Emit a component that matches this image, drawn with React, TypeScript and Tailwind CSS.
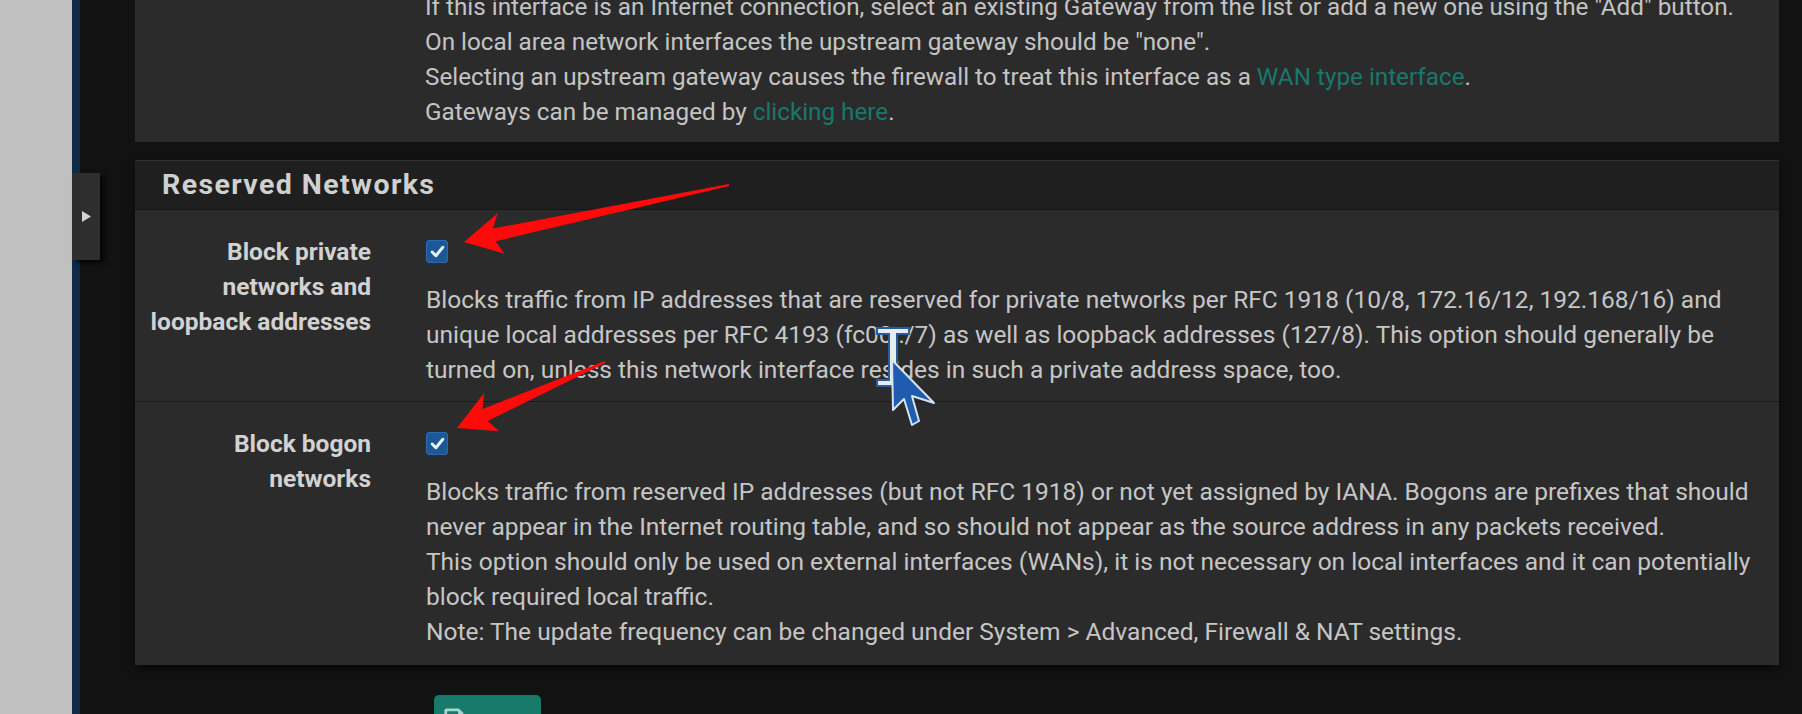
import { FaSave } from 'react-icons/fa'

type Pt = [number, number]

// red "swoosh" arrow, built along the line tip -> tail
const arrowPoints = (tip: Pt, tail: Pt) => {
  const dx = tail[0] - tip[0]
  const dy = tail[1] - tip[1]
  const len = Math.hypot(dx, dy)
  const u: Pt = [dx / len, dy / len]
  const p: Pt = [-u[1], u[0]]
  const at = (a: number, b: number) =>
    `${(tip[0] + u[0] * a + p[0] * b).toFixed(1)},${(tip[1] + u[1] * a + p[1] * b).toFixed(1)}`
  return [
    at(0, 0),
    at(39, -21),
    at(31, -7),
    at(len, -1),
    at(len, 1),
    at(31, 6),
    at(37, 20),
  ].join(' ')
}

const Checkbox = () => (
  <div className="flex h-[23px] w-[22px] items-center justify-center rounded-[3px] border border-[#2c6cae] bg-[#1b5896]">
    <svg viewBox="0 0 16 16" className="h-[17px] w-[17px]">
      <path
        d="M3 8.5 L6.5 12 L13 4"
        fill="none"
        stroke="#e8f0f8"
        strokeWidth="2.8"
        strokeLinecap="round"
        strokeLinejoin="round"
      />
    </svg>
  </div>
)

const Row = ({
  label,
  lines,
  pb,
}: {
  label: string[]
  lines: string[]
  pb: string
}) => (
  <div className={'grid grid-cols-[236px_1fr] gap-x-[55px] pt-[24px] ' + pb}>
    <div className="text-right text-[24.5px] font-bold leading-[35px] text-[#d2d2d2]">
      {label.map((l) => (
        <div key={l} className="whitespace-nowrap">
          {l}
        </div>
      ))}
    </div>
    <div>
      <div className="flex h-[35px] items-center">
        <Checkbox />
      </div>
      <div className="mt-[13px] text-[24.5px] leading-[35px] text-[#c6c6c6]">
        {lines.map((l) => (
          <div key={l} className="whitespace-nowrap">
            {l}
          </div>
        ))}
      </div>
    </div>
  </div>
)

export default function App() {
  return (
    <div className="relative flex h-[714px] w-[1802px] overflow-hidden bg-[#121212] font-[family-name:Roboto,sans-serif]">
      <div className="w-[72px] shrink-0 bg-[#c0c0c0]" />
      <div className="w-[8px] shrink-0 bg-[#0f2b47]" />

      <main className="flex-1 pl-[55px] pr-[23px]">
        {/* gateway help text, scrolled partly off the top */}
        <section className="h-[142px] overflow-hidden bg-[#2b2b2b] pl-[290px]">
          <div className="-mt-[10px] text-[24.25px] leading-[35px] text-[#c4c4c4]">
            <div className="whitespace-nowrap">
              If this interface is an Internet connection, select an existing Gateway from the list or add a new one using the "Add" button.
            </div>
            <div className="whitespace-nowrap">
              On local area network interfaces the upstream gateway should be "none".
            </div>
            <div className="whitespace-nowrap">
              Selecting an upstream gateway causes the firewall to treat this interface as a{' '}
              <span className="text-[#19786b]">WAN type interface</span>.
            </div>
            <div className="whitespace-nowrap">
              Gateways can be managed by <span className="text-[#19786b]">clicking here</span>.
            </div>
          </div>
        </section>

        <div className="h-[18px]" />

        <section className="bg-[#2b2b2b] shadow-[0_4px_8px_rgba(0,0,0,0.5)]">
          <div className="flex h-[50px] items-center border-t border-b border-t-[#303030] border-b-[#161616] bg-[#1f1f1f] px-[27px]">
            <h2 className="text-[28.5px] font-bold tracking-[1.4px] text-[#d0d0d0]">Reserved Networks</h2>
          </div>

          <Row
            label={['Block private', 'networks and', 'loopback addresses']}
            lines={[
              'Blocks traffic from IP addresses that are reserved for private networks per RFC 1918 (10/8, 172.16/12, 192.168/16) and',
              'unique local addresses per RFC 4193 (fc00::/7) as well as loopback addresses (127/8). This option should generally be',
              'turned on, unless this network interface resides in such a private address space, too.',
            ]}
            pb="pb-[14px]"
          />
          <div className="h-px bg-[#1a1a1a]" />
          <Row
            label={['Block bogon', 'networks']}
            lines={[
              'Blocks traffic from reserved IP addresses (but not RFC 1918) or not yet assigned by IANA. Bogons are prefixes that should',
              'never appear in the Internet routing table, and so should not appear as the source address in any packets received.',
              'This option should only be used on external interfaces (WANs), it is not necessary on local interfaces and it can potentially',
              'block required local traffic.',
              'Note: The update frequency can be changed under System > Advanced, Firewall & NAT settings.',
            ]}
            pb="pb-[16px]"
          />
        </section>

        <div className="mt-[30px] pl-[299px]">
          <button className="flex h-[46px] w-[107px] items-start gap-2 rounded-[5px] bg-[#177a6b] px-[9px] pt-[12px] text-[24px] leading-[35px] text-[#e8f4f2]">
            <FaSave size={22} className="shrink-0 text-[#a6d6cd]" />
            <span className="mt-[14px]">Save</span>
          </button>
        </div>
      </main>

      {/* collapsed side tab */}
      <div className="absolute left-[72px] top-[173px] flex h-[87px] w-[28px] items-center justify-center bg-[#2e2e2e] shadow-[4px_3px_4px_rgba(0,0,0,0.7)]">
        <svg viewBox="0 0 9 11" className="h-[11px] w-[9px]">
          <polygon points="0,0 9,5.5 0,11" fill="#d4d4d4" />
        </svg>
      </div>

      {/* annotations and mouse cursor */}
      <svg className="pointer-events-none absolute left-0 top-0" width="1802" height="714">
        <polygon points={arrowPoints([464, 242], [729, 185])} fill="#ff0a0a" />
        <polygon points={arrowPoints([457, 428], [605, 362])} fill="#ff0a0a" />
        <path
          d="M877 328 H909 V334 H897 V380 H905 V386 H877 V380 H889 V334 H877 Z"
          fill="#e6ecf2"
          stroke="#2b5b9c"
          strokeWidth="2"
        />
        <polygon
          points="892,360 893,410 904,399 912,425 919,421 912,396 934,403"
          fill="#1f5cb0"
          stroke="#d6e2ee"
          strokeWidth="2"
          strokeLinejoin="round"
        />
      </svg>
    </div>
  )
}
